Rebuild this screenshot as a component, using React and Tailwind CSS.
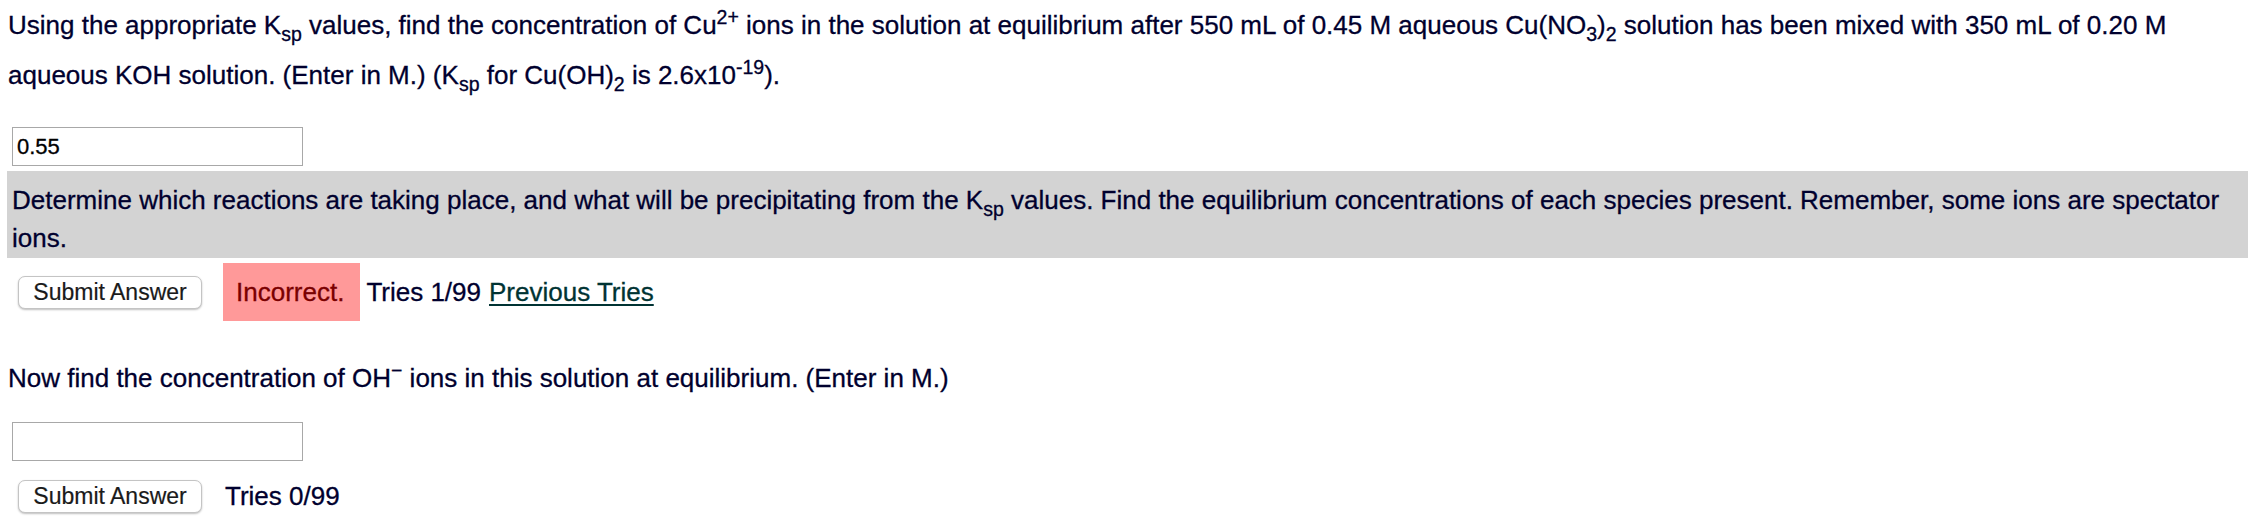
import React from 'react';

const font = { fontFamily: '"Liberation Sans", Arial, Helvetica, sans-serif' };

const SubmitButton = () => (
  <button
    type="button"
    className="h-[33px] w-[184px] rounded-[7px] border border-[#c4c4c4] bg-white text-[23px] leading-none text-[#1a1a1a] shadow-[0_1px_2px_rgba(0,0,0,0.25)] [-webkit-text-stroke:0.2px]"
  >
    Submit Answer
  </button>
);

const AnswerInput = ({ value }) => (
  <input
    type="text"
    defaultValue={value}
    className="ml-[5px] block h-[39px] w-[291px] border border-[#a8a8a8] bg-white pl-[4px] text-[22px] text-black outline-none"
  />
);

export default function App() {
  return (
    <div
      className="min-h-[522px] bg-white pl-[7px] pr-[14px] text-[26px] text-[#00002e] [-webkit-text-stroke:0.3px] [&_sub]:bottom-[-0.35em]"
      style={font}
    >
      <p className="pl-[1px] leading-[50px] whitespace-nowrap">
        Using the appropriate K<sub>sp</sub> values, find the concentration of Cu<sup>2+</sup> ions in the solution at
        equilibrium after 550 mL of 0.45 M aqueous Cu(NO<sub>3</sub>)<sub>2</sub> solution has been mixed with 350 mL of 0.20 M
        <br />
        aqueous KOH solution. (Enter in M.) (K<sub>sp</sub> for Cu(OH)<sub>2</sub> is 2.6x10<sup>-19</sup>).
      </p>

      <div className="mt-[27px]">
        <AnswerInput value="0.55" />
      </div>

      <div className="mt-[5px] h-[87px] bg-[#d3d3d3] pl-[5px] pt-[10px] leading-[38px] whitespace-nowrap">
        Determine which reactions are taking place, and what will be precipitating from the K<sub>sp</sub> values. Find the
        equilibrium concentrations of each species present. Remember, some ions are spectator
        <br />
        ions.
      </div>

      <div className="mt-[5px] flex items-center pl-[11px]">
        <SubmitButton />
        <div className="ml-[21px] flex h-[58px] items-center bg-[#ff9999] pl-[13px] pr-[16px] text-[#7a0000]">
          Incorrect.
        </div>
        <span className="ml-[6px]">Tries 1/99</span>
        <a href="#" className="ml-[8px] text-[#003333] underline underline-offset-[3px]">
          Previous Tries
        </a>
      </div>

      <p className="mt-[42px] pl-[1px] leading-[30px]">
        Now find the concentration of OH<sup>−</sup> ions in this solution at equilibrium. (Enter in M.)
      </p>

      <div className="mt-[29px]">
        <AnswerInput value="" />
      </div>

      <div className="mt-[16px] flex items-center pl-[11px]">
        <SubmitButton />
        <span className="ml-[23px]">Tries 0/99</span>
      </div>
    </div>
  );
}
